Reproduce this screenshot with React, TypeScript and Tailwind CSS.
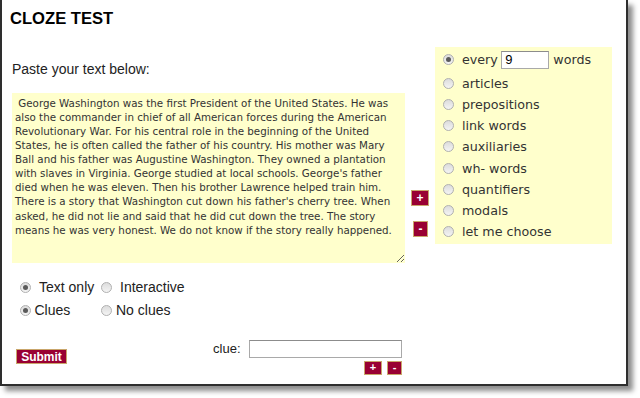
import React from "react";

const Radio = ({ checked }: { checked?: boolean }) => (
  <span className="flex items-center justify-center w-[11px] h-[11px] shrink-0 rounded-full border border-[#b0b0b0] bg-linear-to-b from-[#dcdcdc] to-[#f4f4f4]">
    {checked && <span className="w-[5px] h-[5px] rounded-full bg-[#5a5a5a]" />}
  </span>
);

const text = [
  " George Washington was the first President of the United States. He was",
  "also the commander in chief of all American forces during the American",
  "Revolutionary War. For his central role in the beginning of the United",
  "States, he is often called the father of his country. His mother was Mary",
  "Ball and his father was Augustine Washington. They owned a plantation",
  "with slaves in Virginia. George studied at local schools. George's father",
  "died when he was eleven. Then his brother Lawrence helped train him.",
  "There is a story that Washington cut down his father's cherry tree. When",
  "asked, he did not lie and said that he did cut down the tree. The story",
  "means he was very honest. We do not know if the story really happened.",
].join("\n");

const options = [
  "articles",
  "prepositions",
  "link words",
  "auxiliaries",
  "wh- words",
  "quantifiers",
  "modals",
  "let me choose",
];

const btn =
  "flex items-center justify-center bg-[#990033] border border-[#c9a66b] text-white font-bold font-['Liberation_Sans',Arial,sans-serif] leading-none";

export default function App() {
  return (
    <div className="w-[640px] h-[398px] bg-white">
      <div className="w-[628px] h-[386px] border-l-2 border-r-2 border-b-2 border-[#2e2e2e] bg-white shadow-[5px_5px_5px_rgba(0,0,0,0.45)] font-['Liberation_Sans',Arial,sans-serif]">
        <div className="pl-[8px] pt-[9px] text-[16.6px] leading-[19px] font-bold text-black">
          CLOZE TEST
        </div>
        <div className="flex items-start mt-[19px]">
          {/* left column */}
          <div className="ml-[10px] w-[393px] flex flex-col pt-[14px]">
            <div className="text-[14px] leading-[16px] text-[#222]">Paste your text below:</div>
            <textarea
              className="mt-[16px] w-[393px] h-[170px] bg-[#ffffcc] border-0 outline-none pl-[3px] pt-[3px] text-[10.3px] leading-[14.07px] text-[#333] font-['DejaVu_Sans',Verdana,sans-serif] whitespace-pre overflow-hidden"
              wrap="off"
              defaultValue={text}
            />
            <div className="flex items-center mt-[14px] h-[21px] text-[14px] text-[#222] whitespace-nowrap">
              <div className="flex items-center w-[88px] shrink-0 pl-[8px]">
                <Radio checked />
                <span className="ml-[8px] shrink-0">Text only</span>
              </div>
              <div className="flex items-center pl-[0.5px] shrink-0">
                <Radio />
                <span className="ml-[8.5px] shrink-0">Interactive</span>
              </div>
            </div>
            <div className="flex items-center mt-[1px] h-[22px] text-[14px] text-[#222] whitespace-nowrap">
              <div className="flex items-center w-[89px] shrink-0 pl-[8px]">
                <Radio checked />
                <span className="ml-[3.5px] shrink-0">Clues</span>
              </div>
              <div className="flex items-center shrink-0">
                <Radio />
                <span className="ml-[4px] shrink-0">No clues</span>
              </div>
            </div>
            <div className="flex items-start justify-between mt-[18px] pr-[3px]">
              <button className={`${btn} mt-[10px] ml-[4px] w-[51px] h-[15px] text-[12px]`}>Submit</button>
              <div className="flex flex-col items-end">
                <div className="flex items-center">
                  <span className="text-[13px] text-[#222]">clue:</span>
                  <input className="ml-[8.5px] w-[153px] h-[18px] border border-[#a9a9a9] border-t-[#8c8c8c] bg-white outline-none" />
                </div>
                <div className="flex mt-[2px] gap-[5px]">
                  <button className={`${btn} w-[18px] h-[14px] text-[11px]`}>+</button>
                  <button className={`${btn} w-[15px] h-[14px] text-[11px]`}>-</button>
                </div>
              </div>
            </div>
          </div>
          {/* middle buttons */}
          <div className="w-[30px] flex flex-col pt-[143px]">
            <button className={`${btn} ml-[6px] w-[18px] h-[16px] text-[12px]`}>+</button>
            <button className={`${btn} ml-[8px] mt-[15px] w-[15px] h-[16px] text-[12px]`}>-</button>
          </div>
          {/* right panel */}
          <div className="w-[177px] bg-[#ffffcc] pl-[8px] pb-[1px] font-['DejaVu_Sans',Verdana,sans-serif] text-[12.7px] text-[#333]">
            <div className="flex items-center h-[25.5px]">
              <Radio checked />
              <span className="ml-[8px]">every</span>
              <input
                className="ml-[3.5px] w-[48px] h-[18px] border border-[#a9a9a9] border-t-[#8c8c8c] bg-white outline-none pl-[3px] text-[13px] text-black font-['Liberation_Sans',Arial,sans-serif]"
                defaultValue="9"
              />
              <span className="ml-[4px]">words</span>
            </div>
            {options.map((o) => (
              <div key={o} className="flex items-center h-[21.25px]">
                <Radio />
                <span className="ml-[8px]">{o}</span>
              </div>
            ))}
          </div>
        </div>
      </div>
    </div>
  );
}
